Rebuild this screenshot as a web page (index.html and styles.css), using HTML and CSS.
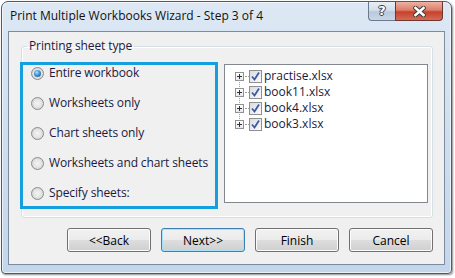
FILE: index.html
```html
<!DOCTYPE html>
<html>
<head>
<meta charset="utf-8">
<link rel="stylesheet" href="styles.css">
</head>
<body>
<div class="window">
  <div class="titlebar">
    <span class="title">Print Multiple Workbooks Wizard - Step 3 of 4</span>
    <div class="caption-btns">
      <span class="cbtn help">?</span>
      <span class="cbtn close">
        <svg width="13" height="11" viewBox="0 0 13 11">
          <path d="M2.5 2 L10.5 9 M10.5 2 L2.5 9" stroke="#3a3a3a" stroke-width="4.4" stroke-linecap="square" fill="none"/>
          <path d="M2.5 2 L10.5 9 M10.5 2 L2.5 9" stroke="#ffffff" stroke-width="2.6" stroke-linecap="square" fill="none"/>
        </svg>
      </span>
    </div>
  </div>
  <div class="client">
    <fieldset class="group">
      <legend>Printing sheet type</legend>
      <div class="group-body">
        <div class="options">
          <label class="opt"><span class="radio on"></span>Entire workbook</label>
          <label class="opt"><span class="radio"></span>Worksheets only</label>
          <label class="opt"><span class="radio"></span>Chart sheets only</label>
          <label class="opt"><span class="radio"></span>Worksheets and chart sheets</label>
          <label class="opt"><span class="radio"></span>Specify sheets:</label>
        </div>
        <div class="tree">
          <div class="node first"><span class="exp"></span><span class="hdots"></span><span class="chk"><svg width="11" height="11" viewBox="0 0 11 11"><path d="M2 5.5 L4.5 8.5 L9 1.5" stroke="#3b5ba5" stroke-width="1.8" fill="none"/></svg></span><span class="name">practise.xlsx</span></div>
          <div class="node"><span class="exp"></span><span class="hdots"></span><span class="chk"><svg width="11" height="11" viewBox="0 0 11 11"><path d="M2 5.5 L4.5 8.5 L9 1.5" stroke="#3b5ba5" stroke-width="1.8" fill="none"/></svg></span><span class="name">book11.xlsx</span></div>
          <div class="node"><span class="exp"></span><span class="hdots"></span><span class="chk"><svg width="11" height="11" viewBox="0 0 11 11"><path d="M2 5.5 L4.5 8.5 L9 1.5" stroke="#3b5ba5" stroke-width="1.8" fill="none"/></svg></span><span class="name">book4.xlsx</span></div>
          <div class="node last"><span class="exp"></span><span class="hdots"></span><span class="chk"><svg width="11" height="11" viewBox="0 0 11 11"><path d="M2 5.5 L4.5 8.5 L9 1.5" stroke="#3b5ba5" stroke-width="1.8" fill="none"/></svg></span><span class="name">book3.xlsx</span></div>
        </div>
      </div>
    </fieldset>
    <div class="buttons">
      <button class="btn">&lt;&lt;Back</button>
      <button class="btn default">Next&gt;&gt;</button>
      <button class="btn">Finish</button>
      <button class="btn">Cancel</button>
    </div>
  </div>
</div>
</body>
</html>
```
FILE: styles.css
```css
html, body {
  margin: 0;
  padding: 0;
  background: #ffffff;
}
body {
  width: 455px;
  height: 278px;
  overflow: hidden;
  font-family: "Open Sans", "Noto Sans", sans-serif;
  font-size: 12px;
  color: #000;
}
.window {
  box-sizing: border-box;
  margin: 1px 0 0 1px;
  width: 451px;
  height: 273px;
  border: 1px solid #4e5b6a;
  border-radius: 7px 7px 4px 4px;
  padding: 0 6px 8px 6px;
  background: linear-gradient(to bottom, #dde8f4 0%, #cfdeef 50%, #c3d6ec 100%);
  box-shadow: inset 0 0 0 1px rgba(255,255,255,0.6), 1px 1px 2px rgba(0,0,0,0.45);
  display: flex;
  flex-direction: column;
}
.titlebar {
  height: 29px;
  display: flex;
  align-items: flex-start;
  justify-content: space-between;
}
.title {
  margin-left: 2px;
  padding-top: 6px;
  line-height: 16px;
  color: #111;
}
.caption-btns {
  display: flex;
  margin-right: 2px;
}
.cbtn {
  box-sizing: border-box;
  height: 19px;
  display: flex;
  align-items: center;
  justify-content: center;
  border: 1px solid #6a7a8e;
  border-top: none;
}
.help {
  width: 27px;
  border-radius: 0 0 0 4px;
  border-right: none;
  background: linear-gradient(to bottom, #e7eef6 0%, #d3dfec 45%, #b9c9dc 55%, #c9d7e6 100%);
  color: #fff;
  font-weight: bold;
  font-size: 13px;
  font-family: "DejaVu Sans", sans-serif;
  text-shadow: -1px 0 #3c3c3c, 1px 0 #3c3c3c, 0 -1px #3c3c3c, 0 1px #3c3c3c;
  line-height: 16px;
}
.close {
  width: 48px;
  border-radius: 0 0 4px 0;
  border-color: #6e3631;
  background: linear-gradient(to bottom, #eeb2a2 0%, #dc7d6b 45%, #c5412c 55%, #d66a52 100%);
}
.client {
  flex: 1;
  border: 1px solid #7d8b9c;
  background: #f0f0f0;
  display: flex;
  flex-direction: column;
}
.group {
  margin: 6px 11px 0 12px;
  padding: 0 0 8px 0;
  border: 1px solid #d5dfe5;
  border-radius: 3px;
  box-shadow: inset 0 0 0 1px #fff;
}
.group legend {
  margin-left: 5px;
  padding: 0 2px;
  line-height: 16px;
  color: #1a1a40;
  letter-spacing: -0.1px;
}
.group-body {
  display: flex;
  align-items: flex-start;
}
.options {
  box-sizing: border-box;
  width: 198px;
  height: 147px;
  margin: 8px 0 0 -2px;
  border: 3px solid #14a0de;
  display: flex;
  flex-direction: column;
  gap: 14px;
}
.opt {
  display: flex;
  align-items: center;
  height: 16px;
  line-height: 16px;
  color: #1a1a40;
  letter-spacing: -0.12px;
}
.radio {
  box-sizing: border-box;
  width: 13px;
  height: 13px;
  margin: 0 5px 0 8px;
  border-radius: 50%;
  border: 1px solid #8a8c8e;
  background: radial-gradient(circle at 50% 50%, #f4f4f4 0%, #e6e6e6 45%, #c6c6c6 100%);
  position: relative;
}
.radio.on::after {
  content: "";
  position: absolute;
  left: 2px;
  top: 2px;
  width: 7px;
  height: 7px;
  border-radius: 50%;
  background: radial-gradient(circle at 40% 35%, #b6e2ff 0%, #3d93d6 45%, #164c86 100%);
}
.tree {
  box-sizing: border-box;
  width: 204px;
  height: 139px;
  margin: 10px 0 0 6px;
  border: 1px solid #828790;
  background: #fff;
  padding: 3px 0 0 10px;
}
.node {
  display: flex;
  align-items: center;
  height: 16px;
  line-height: 16px;
  position: relative;
}
.exp {
  box-sizing: border-box;
  width: 9px;
  height: 9px;
  border: 1px solid #919191;
  background: linear-gradient(to bottom, #fff, #e8e8e8);
  position: relative;
}
.exp::before {
  content: "";
  position: absolute;
  left: 1px;
  top: 3px;
  width: 5px;
  height: 1px;
  background: #303030;
}
.exp::after {
  content: "";
  position: absolute;
  left: 3px;
  top: 1px;
  width: 1px;
  height: 5px;
  background: #303030;
}
.node:not(.last)::after {
  content: "";
  position: absolute;
  left: 4px;
  top: 12px;
  height: 7px;
  border-left: 1px dotted #a0a0a0;
}
.hdots {
  width: 4px;
  margin-left: 1px;
  border-top: 1px dotted #a0a0a0;
}
.chk {
  box-sizing: border-box;
  width: 13px;
  height: 13px;
  border: 1px solid #8f8f8f;
  background: linear-gradient(135deg, #dcdcdc, #fbfbfb);
  display: flex;
  align-items: center;
  justify-content: center;
}
.name {
  margin-left: 2px;
  color: #1a1a40;
}
.buttons {
  display: flex;
  justify-content: flex-end;
  gap: 10px;
  margin-top: 10px;
  padding-right: 11px;
}
.btn {
  box-sizing: border-box;
  width: 84px;
  height: 24px;
  padding: 0;
  font-family: "Open Sans", "Noto Sans", sans-serif;
  font-size: 12px;
  color: #000;
  border: 1px solid #707070;
  border-radius: 3px;
  background: linear-gradient(to bottom, #f2f2f2 0%, #ebebeb 48%, #dddddd 52%, #cfcfcf 100%);
  box-shadow: inset 0 0 0 1px #fcfcfc;
}
.btn.default {
  border-color: #3c7fb1;
  box-shadow: inset 0 0 0 1px #a6e2fa;
}
```
